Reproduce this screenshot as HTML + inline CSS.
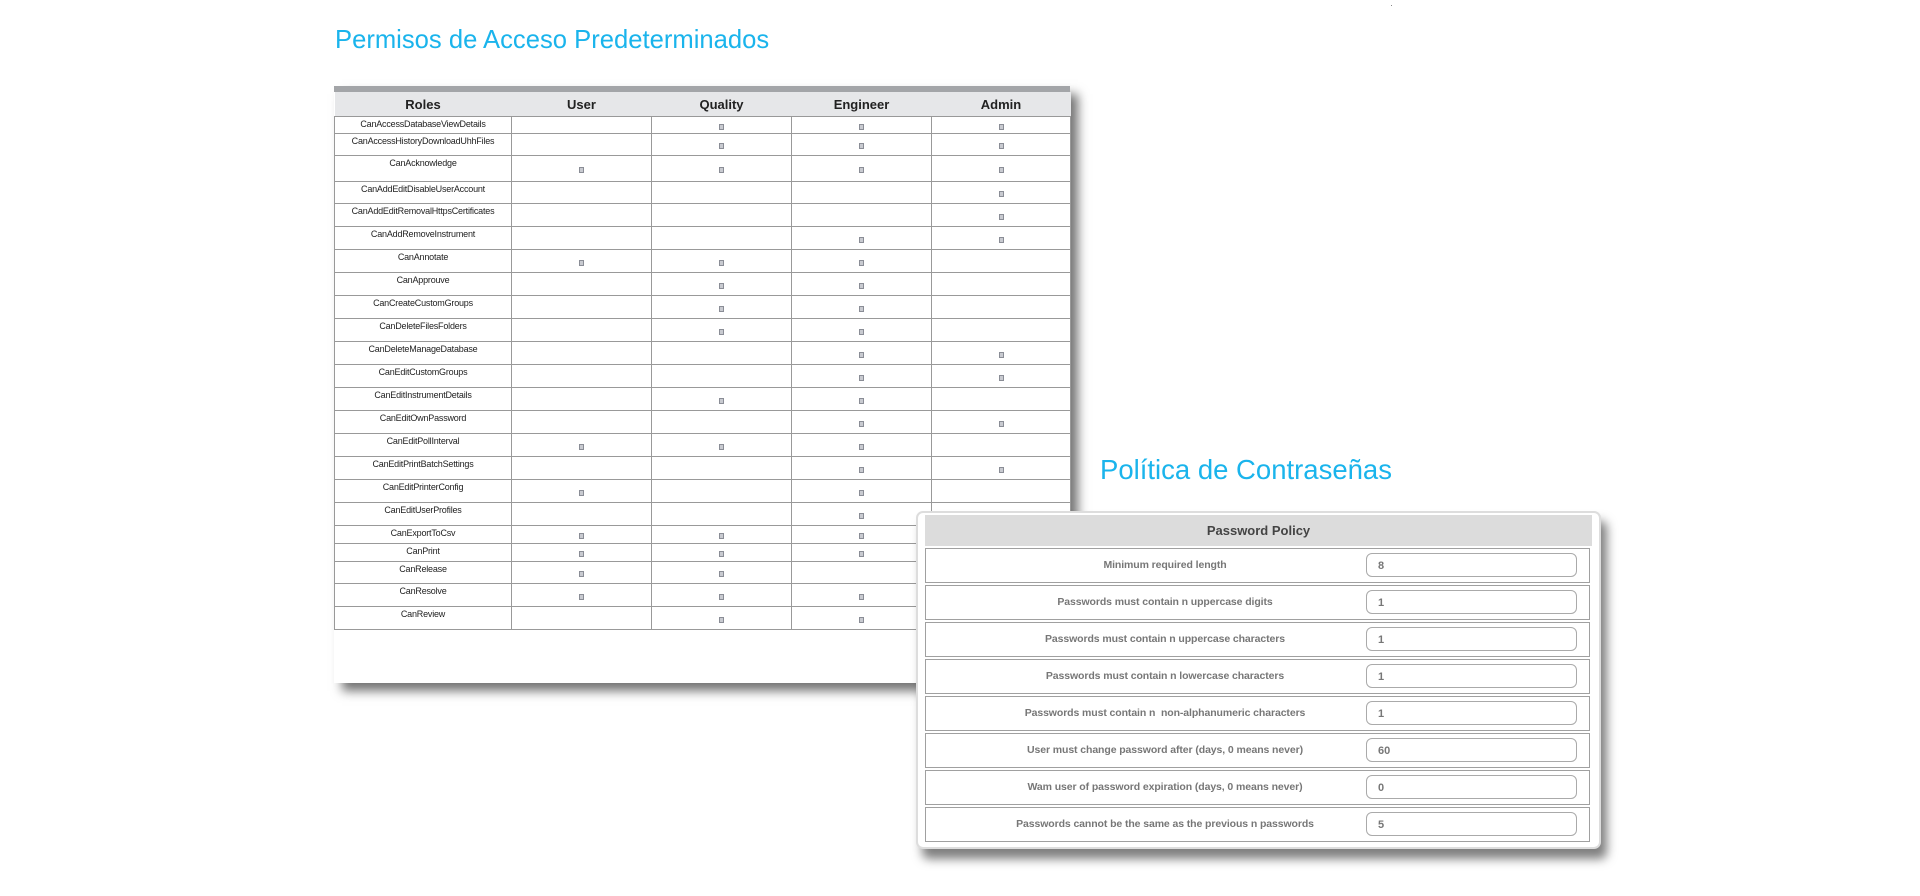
<!DOCTYPE html>
<html><head><meta charset="utf-8"><style>
body{margin:0;width:1920px;height:896px;background:#fff;position:relative;overflow:hidden;font-family:"Liberation Sans",Arial,sans-serif}
.h{position:absolute;color:#1ab4ec;font-weight:normal;margin:0;transform-origin:left}
#wrap{position:absolute;left:334px;top:86px;width:736px;height:597px;background:#fff;box-shadow:8px 8px 10px rgba(0,0,0,.55)}
#wrap .bar{height:6px;background:#a3a5a8}
table.r{border-collapse:collapse;width:736px;table-layout:fixed}
table.r th{background:#e6e7e9;height:24px;font-size:13px;font-weight:bold;color:#222;padding:0}
table.r td{border:1px solid #999;font-size:9px;color:#222;text-align:center;padding:0;letter-spacing:-0.2px}
table.r td.n{vertical-align:top;padding-top:2px}
table.r td.m{vertical-align:middle;line-height:0}
table.r td.m b{display:inline-block;width:3px;height:4px;border:1px solid #8a8d96;background:#c8cad0;margin-top:3px}
#pp{position:absolute;left:916px;top:511px;width:681px;height:334px;background:#fff;border:2px solid #ddd;border-radius:7px;box-shadow:6px 10px 10px rgba(0,0,0,.5)}
#pp .hd{position:absolute;left:7px;top:2px;width:667px;height:31px;background:#dcdcdc;font-size:13px;font-weight:bold;color:#444;text-align:center;line-height:31px}
#pp .row{position:absolute;left:7px;width:663px;height:33px;border:1px solid #a0a0a0}
#pp .row span{position:absolute;left:0;width:478px;text-align:center;top:0;line-height:33px;font-size:10.5px;font-weight:bold;color:#777;letter-spacing:-0.1px}
#pp .row i{position:absolute;left:440px;width:211px;top:4px;height:24px;border:1px solid #aaa;border-radius:6px;font-style:normal;font-size:11px;font-weight:bold;color:#777;line-height:24px;padding-left:11px;box-sizing:border-box}
</style></head><body>
<div class="h" style="left:335px;top:24px;font-size:26px;transform:scaleX(0.985)">Permisos de Acceso Predeterminados</div>
<div class="h" style="left:1100px;top:454px;font-size:27.5px">Política de Contraseñas</div>
<div style="position:absolute;left:1391px;top:5px;width:1px;height:1px;background:#888"></div>
<div id="wrap"><div class="bar"></div>
<table class="r"><colgroup><col style="width:177px"><col style="width:140px"><col style="width:140px"><col style="width:140px"><col style="width:139px"></colgroup>
<tr><th>Roles</th><th>User</th><th>Quality</th><th>Engineer</th><th>Admin</th></tr>
<tr style="height:17px"><td class="n">CanAccessDatabaseViewDetails</td><td class="m"></td><td class="m"><b></b></td><td class="m"><b></b></td><td class="m"><b></b></td></tr>
<tr style="height:22px"><td class="n">CanAccessHistoryDownloadUhhFiles</td><td class="m"></td><td class="m"><b></b></td><td class="m"><b></b></td><td class="m"><b></b></td></tr>
<tr style="height:26px"><td class="n">CanAcknowledge</td><td class="m"><b></b></td><td class="m"><b></b></td><td class="m"><b></b></td><td class="m"><b></b></td></tr>
<tr style="height:22px"><td class="n">CanAddEditDisableUserAccount</td><td class="m"></td><td class="m"></td><td class="m"></td><td class="m"><b></b></td></tr>
<tr style="height:23px"><td class="n">CanAddEditRemovalHttpsCertificates</td><td class="m"></td><td class="m"></td><td class="m"></td><td class="m"><b></b></td></tr>
<tr style="height:23px"><td class="n">CanAddRemoveInstrument</td><td class="m"></td><td class="m"></td><td class="m"><b></b></td><td class="m"><b></b></td></tr>
<tr style="height:23px"><td class="n">CanAnnotate</td><td class="m"><b></b></td><td class="m"><b></b></td><td class="m"><b></b></td><td class="m"></td></tr>
<tr style="height:23px"><td class="n">CanApprouve</td><td class="m"></td><td class="m"><b></b></td><td class="m"><b></b></td><td class="m"></td></tr>
<tr style="height:23px"><td class="n">CanCreateCustomGroups</td><td class="m"></td><td class="m"><b></b></td><td class="m"><b></b></td><td class="m"></td></tr>
<tr style="height:23px"><td class="n">CanDeleteFilesFolders</td><td class="m"></td><td class="m"><b></b></td><td class="m"><b></b></td><td class="m"></td></tr>
<tr style="height:23px"><td class="n">CanDeleteManageDatabase</td><td class="m"></td><td class="m"></td><td class="m"><b></b></td><td class="m"><b></b></td></tr>
<tr style="height:23px"><td class="n">CanEditCustomGroups</td><td class="m"></td><td class="m"></td><td class="m"><b></b></td><td class="m"><b></b></td></tr>
<tr style="height:23px"><td class="n">CanEditInstrumentDetails</td><td class="m"></td><td class="m"><b></b></td><td class="m"><b></b></td><td class="m"></td></tr>
<tr style="height:23px"><td class="n">CanEditOwnPassword</td><td class="m"></td><td class="m"></td><td class="m"><b></b></td><td class="m"><b></b></td></tr>
<tr style="height:23px"><td class="n">CanEditPollInterval</td><td class="m"><b></b></td><td class="m"><b></b></td><td class="m"><b></b></td><td class="m"></td></tr>
<tr style="height:23px"><td class="n">CanEditPrintBatchSettings</td><td class="m"></td><td class="m"></td><td class="m"><b></b></td><td class="m"><b></b></td></tr>
<tr style="height:23px"><td class="n">CanEditPrinterConfig</td><td class="m"><b></b></td><td class="m"></td><td class="m"><b></b></td><td class="m"></td></tr>
<tr style="height:23px"><td class="n">CanEditUserProfiles</td><td class="m"></td><td class="m"></td><td class="m"><b></b></td><td class="m"></td></tr>
<tr style="height:18px"><td class="n">CanExportToCsv</td><td class="m"><b></b></td><td class="m"><b></b></td><td class="m"><b></b></td><td class="m"></td></tr>
<tr style="height:18px"><td class="n">CanPrint</td><td class="m"><b></b></td><td class="m"><b></b></td><td class="m"><b></b></td><td class="m"></td></tr>
<tr style="height:22px"><td class="n">CanRelease</td><td class="m"><b></b></td><td class="m"><b></b></td><td class="m"></td><td class="m"></td></tr>
<tr style="height:23px"><td class="n">CanResolve</td><td class="m"><b></b></td><td class="m"><b></b></td><td class="m"><b></b></td><td class="m"></td></tr>
<tr style="height:23px"><td class="n">CanReview</td><td class="m"></td><td class="m"><b></b></td><td class="m"><b></b></td><td class="m"></td></tr>
</table></div>
<div id="pp"><div class="hd">Password Policy</div>
<div class="row" style="top:35px"><span>Minimum required length</span><i>8</i></div>
<div class="row" style="top:72px"><span>Passwords must contain n uppercase digits</span><i>1</i></div>
<div class="row" style="top:109px"><span>Passwords must contain n uppercase characters</span><i>1</i></div>
<div class="row" style="top:146px"><span>Passwords must contain n lowercase characters</span><i>1</i></div>
<div class="row" style="top:183px"><span>Passwords must contain n&nbsp; non-alphanumeric characters</span><i>1</i></div>
<div class="row" style="top:220px"><span>User must change password after (days, 0 means never)</span><i>60</i></div>
<div class="row" style="top:257px"><span>Wam user of password expiration (days, 0 means never)</span><i>0</i></div>
<div class="row" style="top:294px"><span>Passwords cannot be the same as the previous n passwords</span><i>5</i></div>
</div>
</body></html>
